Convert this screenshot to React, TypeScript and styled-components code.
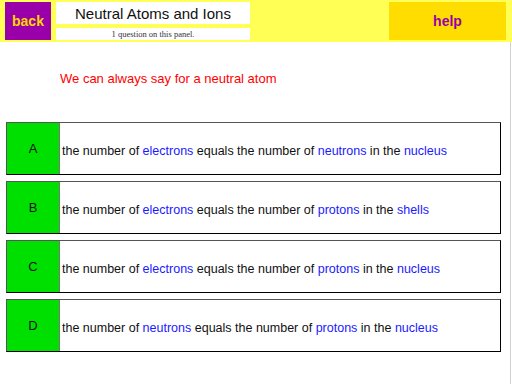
import styled, { createGlobalStyle } from 'styled-components';

const GlobalStyle = createGlobalStyle`
  html, body {
    margin: 0;
    padding: 0;
    background: #ffffff;
    font-family: 'Liberation Sans', Arial, sans-serif;
  }
`;

const Page = styled.div`
  width: 512px;
  height: 384px;
  overflow: hidden;
  display: flex;
  flex-direction: column;
`;

const Header = styled.div`
  height: 42px;
  box-sizing: border-box;
  background: #ffff55;
  display: flex;
  align-items: center;
  padding: 2px 6px 2px 5px;
  gap: 5px;
`;

const BackButton = styled.div`
  width: 46px;
  height: 38px;
  background: #9900aa;
  color: #ffd700;
  font-weight: bold;
  font-size: 14px;
  display: flex;
  align-items: center;
  justify-content: center;
`;

const TitleColumn = styled.div`
  width: 194px;
  height: 38px;
  display: flex;
  flex-direction: column;
  gap: 4px;
`;

const TitleBox = styled.div`
  height: 22px;
  background: #ffffff;
  font-size: 15px;
  color: #111;
  display: flex;
  align-items: center;
  justify-content: center;
`;

const SubtitleBox = styled.div`
  height: 12px;
  background: #ffffff;
  font-family: 'Liberation Serif', 'Times New Roman', serif;
  font-size: 8.5px;
  color: #333;
  display: flex;
  align-items: center;
  justify-content: center;
`;

const Spacer = styled.div`
  flex: 1;
`;

const HelpButton = styled.div`
  width: 117px;
  height: 38px;
  background: #ffdd00;
  color: #9900aa;
  font-weight: bold;
  font-size: 14px;
  display: flex;
  align-items: center;
  justify-content: center;
`;

const Body = styled.div`
  flex: 1;
  border-right: 1px solid #d0d0d0;
  margin-right: 1px;
`;

const Question = styled.div`
  margin: 29px 0 0 60px;
  height: 16px;
  line-height: 16px;
  font-size: 13px;
  color: #ff0000;
`;

const Answers = styled.div`
  margin: 35px 0 0 6px;
  width: 495px;
  display: flex;
  flex-direction: column;
  gap: 6px;
`;

const Row = styled.div`
  height: 53px;
  box-sizing: border-box;
  border: 1px solid #000;
  border-top-color: #555;
  border-left-color: #555;
  display: flex;
  background: #ffffff;
`;

const Letter = styled.div`
  width: 53px;
  background: #00e000;
  border-right: 1px solid #777;
  font-size: 13px;
  color: #111;
  display: flex;
  align-items: center;
  justify-content: center;
  box-sizing: border-box;
`;

const AnswerText = styled.div`
  flex: 1;
  padding: 5px 0 0 2px;
  font-size: 12.5px;
  color: #111;
  display: flex;
  align-items: center;
  white-space: pre;
`;

const Key = styled.span`
  color: #1a1aff;
`;

type Part = string | { k: string };

const answers: { letter: string; parts: Part[] }[] = [
  {
    letter: 'A',
    parts: ['the number of ', { k: 'electrons' }, ' equals the number of ', { k: 'neutrons' }, ' in the ', { k: 'nucleus' }],
  },
  {
    letter: 'B',
    parts: ['the number of ', { k: 'electrons' }, ' equals the number of ', { k: 'protons' }, ' in the ', { k: 'shells' }],
  },
  {
    letter: 'C',
    parts: ['the number of ', { k: 'electrons' }, ' equals the number of ', { k: 'protons' }, ' in the ', { k: 'nucleus' }],
  },
  {
    letter: 'D',
    parts: ['the number of ', { k: 'neutrons' }, ' equals the number of ', { k: 'protons' }, ' in the ', { k: 'nucleus' }],
  },
];

const App = () => {
  return (
    <>
      <GlobalStyle />
      <Page>
        <Header>
          <BackButton>back</BackButton>
          <TitleColumn>
            <TitleBox>Neutral Atoms and Ions</TitleBox>
            <SubtitleBox>1 question on this panel.</SubtitleBox>
          </TitleColumn>
          <Spacer />
          <HelpButton>help</HelpButton>
        </Header>
        <Body>
          <Question>We can always say for a neutral atom</Question>
          <Answers>
            {answers.map((a) => (
              <Row key={a.letter}>
                <Letter>{a.letter}</Letter>
                <AnswerText>
                  {a.parts.map((p, i) =>
                    typeof p === 'string' ? <span key={i}>{p}</span> : <Key key={i}>{p.k}</Key>
                  )}
                </AnswerText>
              </Row>
            ))}
          </Answers>
        </Body>
      </Page>
    </>
  );
};

export default App;
